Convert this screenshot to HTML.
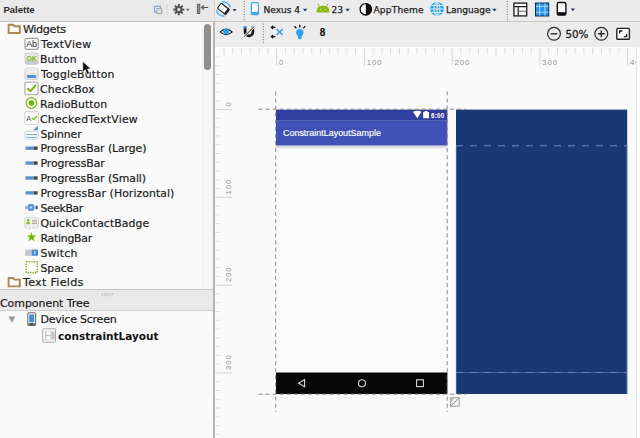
<!DOCTYPE html>
<html>
<head>
<meta charset="utf-8">
<title>Layout Editor</title>
<style>
html,body{margin:0;padding:0;}
body{width:640px;height:438px;overflow:hidden;position:relative;background:#fafafa;
  font-family:"DejaVu Sans","Liberation Sans",sans-serif;font-size:11px;color:#1a1a1a;}
.abs{position:absolute;}
#left{position:absolute;left:0;top:0;width:214px;height:438px;background:#fafafa;}
#palhead{position:absolute;left:0;top:0;width:214px;height:21.8px;background:#e9e9e9;border-bottom:1.9px solid #bcbcbc;box-sizing:border-box;}
#palhead .t{position:absolute;left:3.5px;top:0;line-height:20px;font-family:"Liberation Sans",sans-serif;font-weight:bold;font-size:9.5px;color:#2a2a2a;}
.row{position:absolute;left:0;height:14.89px;line-height:14.89px;white-space:nowrap;font-size:10.85px;color:#1a1a1a;-webkit-text-stroke:0.2px #1a1a1a;}
.row .lbl{position:absolute;left:40px;top:0;}
.row.f .lbl{left:23px;font-size:11.2px;}
.row svg{position:absolute;top:0;}
#vsep{position:absolute;left:213.1px;top:21px;width:2px;height:417px;background:#b6b6b6;z-index:5;}
#vsep2{position:absolute;left:213.8px;top:0;width:1px;height:21px;background:#d6d6d6;z-index:5;}
#cthead{position:absolute;left:0;top:289px;width:214px;height:22px;background:#e9e9e9;border-top:1px solid #c6c6c6;border-bottom:1px solid #cfcfcf;box-sizing:border-box;}
#cthead .t{position:absolute;left:0px;top:3.6px;line-height:20px;font-size:11px;color:#1a1a1a;-webkit-text-stroke:0.2px #1a1a1a;letter-spacing:-0.06px;white-space:nowrap;}
#tb1{position:absolute;left:214px;top:0;width:426px;height:22px;background:#ececec;border-bottom:1.2px solid #c6c6c6;box-sizing:border-box;}
#tb2{position:absolute;left:214px;top:22px;width:426px;height:26.2px;background:#ececec;border-bottom:1px solid #d2d2d2;box-sizing:border-box;}
.tbt{position:absolute;top:-0.4px;-webkit-text-stroke:0.25px #232323;line-height:20px;font-size:9.1px;letter-spacing:-0.05px;color:#232323;white-space:nowrap;}
#canvas{position:absolute;left:214px;top:47px;width:426px;height:391px;background:#fafafa;}
</style>
</head>
<body>

<!-- ================= LEFT PANEL ================= -->
<div id="left">
  <div id="palhead"><span class="t">Palette</span>
    <svg class="abs" style="left:150px;top:0" width="63" height="20" viewBox="150 0 63 20">
      <rect x="154.7" y="6.3" width="5.6" height="5.8" fill="#eef4fb" stroke="#5b9be2" stroke-width="1"/>
      <rect x="156.8" y="8.4" width="5" height="5.2" fill="#dcdcdc" stroke="#a6a6a6" stroke-width="1"/>
      <path d="M167 4V15" stroke="#d3d3d3" stroke-width="1"/>
      <!-- gear -->
      <g transform="translate(178.8 9.6)" fill="#555">
        <circle r="3.6"/>
        <g id="tooth"><rect x="-1" y="-5.6" width="2" height="11.2"/></g>
        <rect x="-1" y="-5.6" width="2" height="11.2" transform="rotate(45)"/>
        <rect x="-1" y="-5.6" width="2" height="11.2" transform="rotate(90)"/>
        <rect x="-1" y="-5.6" width="2" height="11.2" transform="rotate(135)"/>
        <circle r="1.5" fill="#e9e9e9"/>
      </g>
      <path d="M186 8.8H189.6L187.8 11.2Z" fill="#666"/>
      <!-- hide -->
      <rect x="197.4" y="4.3" width="2.4" height="9.2" fill="#9a9a9a" stroke="#555" stroke-width="0.9"/>
      <path d="M208.2 7.5H202M204 5.4L201.6 7.5L204 9.6" fill="none" stroke="#555" stroke-width="1.1"/>
    </svg>
  </div>
  <div class="abs" style="left:202px;top:22px;width:11px;height:267px;background:#f6f6f6;border-left:1px solid #ededed;box-sizing:border-box"></div>
  <div class="abs" style="left:204.2px;top:24px;width:7px;height:46px;border-radius:3.5px;background:#8f8f8f"></div>
  <div id="rows">
  <div class="row f" style="top:23.30px"><!--ICON0--><span class="lbl" style="left:22.90px;letter-spacing:-0.350px">Widgets</span></div>
  <div class="row" style="top:38.19px"><!--ICON1--><span class="lbl" style="left:41.00px;letter-spacing:0.357px">TextView</span></div>
  <div class="row" style="top:53.08px"><!--ICON2--><span class="lbl" style="left:40.00px;letter-spacing:0.050px">Button</span></div>
  <div class="row" style="top:67.97px"><!--ICON3--><span class="lbl" style="left:41.00px;letter-spacing:0.205px">ToggleButton</span></div>
  <div class="row" style="top:82.86px"><!--ICON4--><span class="lbl" style="left:40.00px;letter-spacing:0.179px">CheckBox</span></div>
  <div class="row" style="top:97.75px"><!--ICON5--><span class="lbl" style="left:40.00px;letter-spacing:0.025px">RadioButton</span></div>
  <div class="row" style="top:112.64px"><!--ICON6--><span class="lbl" style="left:40.00px;letter-spacing:0.250px">CheckedTextView</span></div>
  <div class="row" style="top:127.53px"><!--ICON7--><span class="lbl" style="left:40.45px;letter-spacing:-0.083px">Spinner</span></div>
  <div class="row" style="top:142.42px"><!--ICON8--><span class="lbl" style="left:40.45px;letter-spacing:-0.069px">ProgressBar (Large)</span></div>
  <div class="row" style="top:157.31px"><!--ICON9--><span class="lbl" style="left:40.45px;letter-spacing:-0.050px">ProgressBar</span></div>
  <div class="row" style="top:172.20px"><!--ICON10--><span class="lbl" style="left:40.45px;letter-spacing:-0.069px">ProgressBar (Small)</span></div>
  <div class="row" style="top:187.09px"><!--ICON11--><span class="lbl" style="left:40.45px;letter-spacing:0.076px">ProgressBar (Horizontal)</span></div>
  <div class="row" style="top:201.98px"><!--ICON12--><span class="lbl" style="left:40.45px;letter-spacing:-0.375px">SeekBar</span></div>
  <div class="row" style="top:216.87px"><!--ICON13--><span class="lbl" style="left:40.45px;letter-spacing:0.078px">QuickContactBadge</span></div>
  <div class="row" style="top:231.76px"><!--ICON14--><span class="lbl" style="left:40.45px;letter-spacing:-0.219px">RatingBar</span></div>
  <div class="row" style="top:246.65px"><!--ICON15--><span class="lbl" style="left:40.45px;letter-spacing:0.200px">Switch</span></div>
  <div class="row" style="top:261.54px"><!--ICON16--><span class="lbl" style="left:40.45px;letter-spacing:0.000px">Space</span></div>
  <div class="row f" style="top:276.43px"><!--ICON17--><span class="lbl" style="left:23.00px;letter-spacing:0.250px">Text Fields</span></div>
  </div>
  <svg class="abs" style="left:0;top:0" width="213" height="290" viewBox="0 0 213 290">
    <!-- folder: Widgets -->
    <path d="M8.6 33V24.8H13.2L14.4 26.3H19.8V33Z" fill="#fdfdfd" stroke="#ae8750" stroke-width="1.9" stroke-linejoin="miter"/>
    <path d="M8 24h5.6l1.2 1.5H8z" fill="#ae8750"/>
    <!-- TextView -->
    <rect x="25" y="38.3" width="13.2" height="11" rx="2" fill="#ffffff" stroke="#9d9d9d" stroke-width="1.2"/>
    <text x="31.5" y="47.4" font-family="Liberation Sans, sans-serif" font-size="9" fill="#222" text-anchor="middle" letter-spacing="-0.2">Ab</text>
    <!-- Button -->
    <rect x="25" y="53" width="13.2" height="11.2" rx="2" fill="#e6e6e6" stroke="#c6c6c6" stroke-width="0.9"/>
    <rect x="25" y="60.6" width="13.2" height="3.6" rx="1.6" fill="#cbcbcb"/>
    <text x="31.6" y="61.2" font-family="Liberation Sans, sans-serif" font-weight="bold" font-size="6.8" fill="#7db500" text-anchor="middle">OK</text>
    <!-- ToggleButton -->
    <rect x="25" y="68" width="13.2" height="11.6" rx="2" fill="#e4e4e4" stroke="#cdcdcd" stroke-width="0.9"/>
    <rect x="25.6" y="68.6" width="12" height="4.6" rx="1.6" fill="#efefef"/>
    <rect x="27" y="75" width="9.2" height="3" rx="1.2" fill="#4f8fd3"/>
    <!-- CheckBox -->
    <rect x="24.9" y="82.2" width="13.2" height="12.4" rx="2.2" fill="#ffffff" stroke="#b4b4b4" stroke-width="1.3"/>
    <path d="M27.2 88.2L30.4 91.2L36 85" fill="none" stroke="#6fb900" stroke-width="1.9"/>
    <!-- RadioButton -->
    <circle cx="31.4" cy="103" r="5.3" fill="#ffffff" stroke="#74bb12" stroke-width="1.2"/>
    <circle cx="31.4" cy="103" r="2.8" fill="#6cb600"/>
    <!-- CheckedTextView -->
    <rect x="24.9" y="111.6" width="13.4" height="12.8" rx="1" fill="#ffffff" stroke="#c9c9c9" stroke-width="0.9"/>
    <text x="28.6" y="121" font-family="Liberation Sans, sans-serif" font-size="7.4" fill="#555" text-anchor="middle">A</text>
    <path d="M32.2 118L33.8 119.6L37 115.8" fill="none" stroke="#6fb900" stroke-width="1.3"/>
    <!-- Spinner -->
    <path d="M38 125.8V130.2H32.8Z" fill="#5d97d6"/>
    <rect x="24.9" y="131.2" width="13.2" height="8" rx="1" fill="#ffffff" stroke="#cfcfcf" stroke-width="0.9"/>
    <path d="M26.3 134.6H36.8M26.3 137.4H36.8" stroke="#5d97d6" stroke-width="0.9"/>
    <!-- ProgressBars -->
    <g>
      <rect x="25.5" y="146.5" width="8.2" height="3.4" fill="#5b93d2"/><rect x="33.7" y="146.5" width="3.9" height="3.4" fill="#454545"/>
      <rect x="25.5" y="161.4" width="8.2" height="3.4" fill="#5b93d2"/><rect x="33.7" y="161.4" width="3.9" height="3.4" fill="#454545"/>
      <rect x="25.5" y="176.3" width="8.2" height="3.4" fill="#5b93d2"/><rect x="33.7" y="176.3" width="3.9" height="3.4" fill="#454545"/>
      <rect x="25.5" y="191.2" width="8.2" height="3.4" fill="#5b93d2"/><rect x="33.7" y="191.2" width="3.9" height="3.4" fill="#454545"/>
    </g>
    <!-- SeekBar -->
    <rect x="25.4" y="205.8" width="1.3" height="3.2" fill="#5b9ad6"/>
    <rect x="35.6" y="205.8" width="2" height="3.2" fill="#454545"/>
    <circle cx="31" cy="207.4" r="3.7" fill="#5b9ad6"/>
    <circle cx="31" cy="207.4" r="1" fill="#e8f1fa"/>
    <!-- QuickContactBadge -->
    <rect x="24.9" y="217.8" width="13.4" height="10.2" rx="1.2" fill="#f4f4f4" stroke="#cdcdcd" stroke-width="0.9"/>
    <circle cx="28.2" cy="220.2" r="1.3" fill="#86b81c"/>
    <path d="M26.2 224.2q0-2.4 2-2.4t2 2.4z" fill="#86b81c"/>
    <path d="M32 220.4h5M32 222h5M32 223.6h5" stroke="#a8a8a8" stroke-width="1"/>
    <path d="M26.4 228v-2.2h2.2v2.2M30.4 228v-2.2h2.2v2.2M34.4 228v-2.2h2.2v2.2" fill="#fff" stroke="#d4d4d4" stroke-width="0.6"/>
    <!-- RatingBar star -->
    <path d="M31.5 232L32.7 235.6H36.4L33.4 237.8L34.5 241.4L31.5 239.2L28.5 241.4L29.6 237.8L26.6 235.6H30.3Z" fill="#6fb900"/>
    <!-- Switch -->
    <rect x="25" y="249.6" width="6.6" height="6.2" fill="#c4c4c4"/>
    <rect x="31.6" y="249.6" width="6.4" height="6.2" fill="#4a8bd2"/>
    <rect x="34.4" y="251.2" width="0.9" height="3" fill="#ffffff"/>
    <!-- Space -->
    <rect x="26.2" y="261.9" width="11" height="10.6" fill="#fbfdf6" stroke="#6fa800" stroke-width="1.3" stroke-dasharray="1.4 1.1"/>
    <!-- folder: Text Fields -->
    <path d="M8.6 286.4V278.1H13.2L14.4 279.6H19.8V286.4Z" fill="#fdfdfd" stroke="#ae8750" stroke-width="1.9"/>
    <path d="M8 277.3h5.6l1.2 1.5H8z" fill="#ae8750"/>
  </svg>
  <div id="cthead"><span class="t">Component Tree</span>
    <svg class="abs" style="left:100px;top:2px" width="14" height="5" viewBox="0 0 14 5"><path d="M1.5 4.2L3 1M4 4.2L5.5 1M6.5 4.2L8 1M9 4.2L10.5 1M11.5 4.2L13 1" stroke="#b4b4b4" stroke-width="0.8"/></svg>
  </div>
  <svg class="abs" style="left:0;top:310px" width="213" height="40" viewBox="0 310 213 40">
    <path d="M8.4 316.4H15.4L11.9 322.8Z" fill="#9d9d9d"/>
    <!-- device icon -->
    <rect x="27.8" y="312.7" width="7.8" height="12.8" rx="1.3" fill="#ffffff" stroke="#6e6e6e" stroke-width="1.1"/>
    <rect x="29.2" y="314.4" width="5" height="8" fill="#4b8fd8"/>
    <rect x="28.3" y="323.2" width="6.8" height="2" fill="#6a6a6a"/>
    <rect x="30.7" y="323.6" width="2" height="1.1" fill="#111"/>
    <!-- constraint layout icon -->
    <rect x="42.7" y="328.8" width="12.8" height="13.4" rx="0.6" fill="#ffffff" stroke="#a6a6a6" stroke-width="1"/>
    <path d="M43.4 331.2H54.8M43.4 339.9H54.8" stroke="#cfcfcf" stroke-width="0.8" fill="none"/>
    <rect x="50.6" y="332" width="4.2" height="7.2" fill="#c6c6c6"/>
    <path d="M45.7 331.6V339.6M45.7 335.6H50.6" fill="none" stroke="#b0b0b0" stroke-width="1"/>
  </svg>
  <div class="abs" style="left:40.4px;top:312.8px;line-height:14.89px;font-size:11px;color:#1a1a1a;-webkit-text-stroke:0.2px #1a1a1a;letter-spacing:-0.22px;white-space:nowrap">Device Screen</div>
  <div class="abs" style="left:58px;top:329px;line-height:14.89px;font-size:10.5px;font-weight:bold;color:#111;white-space:nowrap">constraintLayout</div>
  <!-- mouse cursor -->
  <svg class="abs" style="left:80px;top:59px" width="14" height="18" viewBox="80 59 14 18"><path d="M82.7 61.3V72L85.3 69.8L87.2 74.5L89.5 73.5L87.5 69H90.9Z" fill="#0a0a0a" stroke="#f4f4f4" stroke-width="0.7" stroke-linejoin="round"/></svg>
</div>
<div id="vsep"></div><div id="vsep2"></div>

<!-- ================= TOOLBARS ================= -->
<div id="tb1">
  <svg class="abs" style="left:0;top:0" width="426" height="21" viewBox="214 0 426 21">
    <!-- rotate icon -->
    <g transform="translate(223.4 8.9)">
      <path d="M-1.6 -6.9A7.1 7.1 0 0 1 6.9 -1.4" fill="none" stroke="#3fa9f5" stroke-width="1.3"/>
      <path d="M1.2 7A7.1 7.1 0 0 1 -7 1.2" fill="none" stroke="#3fa9f5" stroke-width="1.3"/>
      <g transform="rotate(-52)">
        <rect x="-3.2" y="-5.2" width="6.4" height="10.4" rx="1" fill="#ffffff" stroke="#1a1a1a" stroke-width="1.1"/>
        <rect x="-3.2" y="3.2" width="6.4" height="2" fill="#1a1a1a"/>
      </g>
    </g>
    <path d="M232.6 8.9H236.6L234.6 11.5Z" fill="#2b3f63"/>
    <path d="M244.2 1V20.5" stroke="#6e6e6e" stroke-width="1" stroke-dasharray="1 1.6"/>
    <!-- phone (blue) -->
    <rect x="251.4" y="2.6" width="7" height="12" rx="1.4" fill="#ffffff" stroke="#3fa9f5" stroke-width="1.3"/>
    <rect x="251.4" y="12" width="7" height="2.6" fill="#3fa9f5"/>
    <path d="M302.8 8.7H307.4L305.1 11.4Z" fill="#2b3f63"/>
    <!-- android -->
    <g fill="#8fb912">
      <path d="M316.6 12.6V10.4Q317.2 5.8 322.9 5.8T329.2 10.4V12.6Z"/>
      <path d="M319.6 7L317.8 3.9M326.2 7L328 3.9" stroke="#8fb912" stroke-width="1" fill="none"/>
    </g>
    <circle cx="320.4" cy="9.6" r="0.6" fill="#f2f7e0"/><circle cx="325.4" cy="9.6" r="0.6" fill="#f2f7e0"/>
    <path d="M345.4 8.7H349.8L347.6 11.4Z" fill="#2b3f63"/>
    <!-- theme -->
    <circle cx="365.8" cy="9.3" r="5.7" fill="#ffffff" stroke="#0c0c0c" stroke-width="1.3"/>
    <path d="M365.8 3.6A5.7 5.7 0 0 1 365.8 15Z" fill="#0c0c0c"/>
    <!-- globe -->
    <circle cx="437" cy="8.9" r="6.9" fill="#2e9fe9"/>
    <g fill="none" stroke="#e4f2fc" stroke-width="1.05">
      <ellipse cx="437" cy="8.9" rx="3" ry="6.4"/>
      <path d="M437 2.4V15.4M430.4 8.9H443.6M431.4 5.4H442.6M431.4 12.4H442.6"/>
    </g>
    <path d="M492.2 8.7H496.6L494.4 11.4Z" fill="#2b3f63"/>
    <path d="M507.3 1V20.5" stroke="#6e6e6e" stroke-width="1" stroke-dasharray="1 1.6"/>
    <!-- design view icon -->
    <rect x="513.9" y="3.1" width="12.8" height="12.8" fill="#ffffff" stroke="#1c1c1c" stroke-width="1.3"/>
    <path d="M514 6.6H526.6M518.2 6.6V15.8" stroke="#1c1c1c" stroke-width="1.2" fill="none"/>
    <path d="M518.4 11.2H526.4" stroke="#777" stroke-width="1.2" fill="none"/>
    <!-- blueprint icon -->
    <rect x="535.5" y="3" width="13.2" height="13" fill="#2196eb" stroke="#10294f" stroke-width="1"/>
    <path d="M539.6 3.4V15.6M545 3.4V15.6M536 6.4H548.4M536 12.2H548.4" stroke="#bfe0fa" stroke-width="0.9" fill="none"/>
    <!-- phone (black) -->
    <rect x="557.3" y="2.5" width="8.6" height="12.6" rx="1.6" fill="#ffffff" stroke="#0d0d0d" stroke-width="1.4"/>
    <rect x="557.3" y="12.2" width="8.6" height="2.9" fill="#0d0d0d"/>
    <path d="M570.8 8.6H575L572.9 11.3Z" fill="#2b3f63"/>
  </svg>
  <span class="tbt" style="left:49.6px">Nexus 4</span>
  <span class="tbt" style="left:117.6px">23</span>
  <span class="tbt" style="left:159.4px;letter-spacing:0.17px">AppTheme</span>
  <span class="tbt" style="left:232px">Language</span>
</div>
<div id="tb2">
  <svg class="abs" style="left:0;top:0" width="426" height="26" viewBox="214 22 426 26">
    <!-- eye -->
    <path d="M220.2 31.9Q226.2 26.4 232.2 31.9Q226.2 37.4 220.2 31.9Z" fill="#ffffff" stroke="#111" stroke-width="1.1"/>
    <circle cx="226.2" cy="31.6" r="3" fill="#2e9fe9"/>
    <!-- magnet -->
    <path d="M245.1 26.4V31.9A3.9 3.9 0 0 0 252.9 31.9V26.4" fill="none" stroke="#111" stroke-width="2.7"/>
    <rect x="243.6" y="26" width="2.8" height="2.4" fill="#2e9fe9"/><rect x="251.6" y="26" width="2.8" height="2.4" fill="#2e9fe9"/>
    <path d="M244 36.6L254.2 26.6" stroke="#ececec" stroke-width="2.2"/>
    <path d="M244.3 36.3L254 26.8" stroke="#111" stroke-width="0.9"/>
    <path d="M263.3 23.6V44" stroke="#6e6e6e" stroke-width="1" stroke-dasharray="1 1.6"/>
    <!-- clear constraints -->
    <path d="M275.4 27.4H271.4M273.2 25.6L271.2 27.4L273.2 29.2M275.4 36.6H271.4M273.2 34.8L271.2 36.6L273.2 38.4" fill="none" stroke="#111" stroke-width="1.1"/>
    <path d="M276.6 29L282.6 35M282.6 29L276.6 35" stroke="#2e9fe9" stroke-width="1.6"/>
    <!-- bulb -->
    <path d="M299.8 24.8V27.4M294.4 26.2L296.4 28.2M305.2 26.2L303.2 28.2" stroke="#111" stroke-width="1.3"/>
    <circle cx="299.8" cy="32.6" r="3.7" fill="#2e9fe9"/>
    <path d="M297.6 34.6H302L301.4 38.6Q299.8 40 298.2 38.6Z" fill="#2e9fe9"/>
    <!-- zoom out -->
    <circle cx="554" cy="33.8" r="6.4" fill="none" stroke="#2a2a2a" stroke-width="1.2"/>
    <path d="M550.6 33.8H557.4" stroke="#2a2a2a" stroke-width="1.4"/>
    <!-- zoom in -->
    <circle cx="601.3" cy="33.8" r="6.4" fill="none" stroke="#2a2a2a" stroke-width="1.2"/>
    <path d="M597.9 33.8H604.7M601.3 30.4V37.2" stroke="#2a2a2a" stroke-width="1.4"/>
    <!-- fit -->
    <rect x="616.8" y="28.4" width="12.6" height="10.8" rx="0.8" fill="#ffffff" stroke="#242424" stroke-width="1.4"/>
    <path d="M619.6 33.6V31H622.4M626.6 34V36.6H623.8" fill="none" stroke="#1c1c1c" stroke-width="1.3"/>
  </svg>
  <span class="abs" style="left:105.8px;top:4px;line-height:14px;font-size:10px;font-weight:bold;color:#000;font-family:'Liberation Sans',sans-serif">8</span>
  <span class="abs" style="left:351.4px;top:5.2px;line-height:14px;font-size:10.4px;color:#1e1e1e;-webkit-text-stroke:0.3px #1e1e1e;letter-spacing:-0.1px;white-space:nowrap">50%</span>
</div>

<!-- ================= CANVAS ================= -->
<div id="canvas">
<svg class="abs" style="left:0;top:0" width="426" height="391" viewBox="214 47 426 391">
  <path d="M223.94 48V54.6M232.72 48V54.6M241.49 48V54.6M250.27 48V54.6M259.05 48V54.6M267.82 48V54.6M285.38 48V54.6M294.15 48V54.6M302.93 48V54.6M311.71 48V54.6M320.49 48V54.6M329.26 48V54.6M338.04 48V54.6M346.82 48V54.6M355.59 48V54.6M373.15 48V54.6M381.92 48V54.6M390.70 48V54.6M399.48 48V54.6M408.25 48V54.6M417.03 48V54.6M425.81 48V54.6M434.59 48V54.6M443.36 48V54.6M460.92 48V54.6M469.69 48V54.6M478.47 48V54.6M487.25 48V54.6M496.02 48V54.6M504.80 48V54.6M513.58 48V54.6M522.36 48V54.6M531.13 48V54.6M548.69 48V54.6M557.46 48V54.6M566.24 48V54.6M575.02 48V54.6M583.80 48V54.6M592.57 48V54.6M601.35 48V54.6M610.13 48V54.6M618.90 48V54.6" stroke="#dedede" stroke-width="1" fill="none"/>
  <path d="M276.60 48V65.6M364.37 48V65.6M452.14 48V65.6M539.91 48V65.6M627.68 48V65.6" stroke="#d0d0d0" stroke-width="0.9" fill="none"/>
  <path d="M215.2 56.94H220.8M215.2 65.72H220.8M215.2 74.49H220.8M215.2 83.27H220.8M215.2 92.05H220.8M215.2 100.82H220.8M215.2 118.38H220.8M215.2 127.15H220.8M215.2 135.93H220.8M215.2 144.71H220.8M215.2 153.48H220.8M215.2 162.26H220.8M215.2 171.04H220.8M215.2 179.82H220.8M215.2 188.59H220.8M215.2 206.15H220.8M215.2 214.92H220.8M215.2 223.70H220.8M215.2 232.48H220.8M215.2 241.25H220.8M215.2 250.03H220.8M215.2 258.81H220.8M215.2 267.59H220.8M215.2 276.36H220.8M215.2 293.92H220.8M215.2 302.69H220.8M215.2 311.47H220.8M215.2 320.25H220.8M215.2 329.02H220.8M215.2 337.80H220.8M215.2 346.58H220.8M215.2 355.36H220.8M215.2 364.13H220.8M215.2 381.69H220.8M215.2 390.46H220.8M215.2 399.24H220.8M215.2 408.02H220.8M215.2 416.79H220.8M215.2 425.57H220.8M215.2 434.35H220.8" stroke="#dedede" stroke-width="1" fill="none"/>
  <path d="M215.2 109.60H232M215.2 197.37H232M215.2 285.14H232M215.2 372.91H232" stroke="#d0d0d0" stroke-width="0.9" fill="none"/>
  <g font-family="Liberation Sans, sans-serif" font-size="7.8" fill="#929292" letter-spacing="0.9">
    <text x="279.0" y="64.7">0</text>
    <text x="366.8" y="64.7">100</text>
    <text x="454.5" y="64.7">200</text>
    <text x="542.3" y="64.7">300</text>
    <text x="630.1" y="64.7">400</text>
    <text transform="translate(231.2 106.6) rotate(-90)">0</text>
    <text transform="translate(231.2 194.4) rotate(-90)">100</text>
    <text transform="translate(231.2 282.1) rotate(-90)">200</text>
    <text transform="translate(231.2 369.9) rotate(-90)">300</text>
  </g>
  <rect x="456" y="109.6" width="171.2" height="284.4" fill="#1a3873"/>
  <path d="M456.4 146V394M626.8 146V394" stroke="#3f6fb0" stroke-width="0.9" fill="none"/>
  <path d="M456 145.8H627.2" stroke="#6b9bd4" stroke-width="0.9" stroke-dasharray="7 7" fill="none"/>
  <path d="M456 372.5H627.2" stroke="#446fae" stroke-width="0.85" fill="none"/>
  <path d="M456 372.5H627.2" stroke="#6189c6" stroke-width="0.85" stroke-dasharray="7 7" fill="none"/>
  <rect x="276" y="109.6" width="171.4" height="284.4" fill="#fbfbfb"/>
  <rect x="276" y="145" width="171.4" height="3.2" fill="#cfd1d9" opacity="0.75"/>
  <rect x="276" y="109.6" width="171.4" height="11.2" fill="#303f9f"/>
  <rect x="276" y="120.8" width="171.4" height="24.6" fill="#3f51b5"/>
  <rect x="276" y="372.5" width="171.4" height="21.5" fill="#070707"/>
  <path d="M413 111.7Q417.3 109.7 421.6 111.7L417.3 118.2Z" fill="#ffffff"/>
  <path d="M423.2 111.9H424.6V111.1H427.6V111.9H429V118.2H423.2Z" fill="#ffffff"/>
  <text x="431" y="117.7" font-family="Liberation Sans, sans-serif" font-size="6.3" font-weight="bold" fill="#ffffff" letter-spacing="0.25">6:00</text>
  <text x="283" y="136.2" font-family="Liberation Sans, sans-serif" font-size="8.95" fill="#ffffff" stroke="#ffffff" stroke-width="0.15">ConstraintLayoutSample</text>
  <path d="M304.6 379.6V386.8L298.6 383.2Z" fill="none" stroke="#cfcfcf" stroke-width="1.15"/>
  <circle cx="362" cy="383.2" r="3.5" fill="none" stroke="#cfcfcf" stroke-width="1.15"/>
  <rect x="416.6" y="379.8" width="6.8" height="6.8" fill="none" stroke="#cfcfcf" stroke-width="1.15"/>
  <g stroke="#8c8c8c" stroke-width="1" stroke-dasharray="4.1 3" fill="none">
    <path d="M275.7 91.3V412"/><path d="M447.2 91.3V412"/>
    <path d="M258.4 109.2H466"/><path d="M258.4 394.2H466"/>
  </g>
  <rect x="450.6" y="397.6" width="8.6" height="8.6" fill="#f4f4f4" stroke="#9e9e9e" stroke-width="1"/>
  <path d="M450.8 406L459 397.8" stroke="#8a8a8a" stroke-width="1"/><path d="M450.6 397.6H455.4L450.6 402.6Z" fill="#bdbdbd"/>
</svg>
<div class="abs" style="left:421.6px;top:0;width:4.4px;height:391px;background:#fcfcfc;border-left:1px solid #e7e7e7;box-sizing:border-box"></div>
</div>

</body>
</html>
